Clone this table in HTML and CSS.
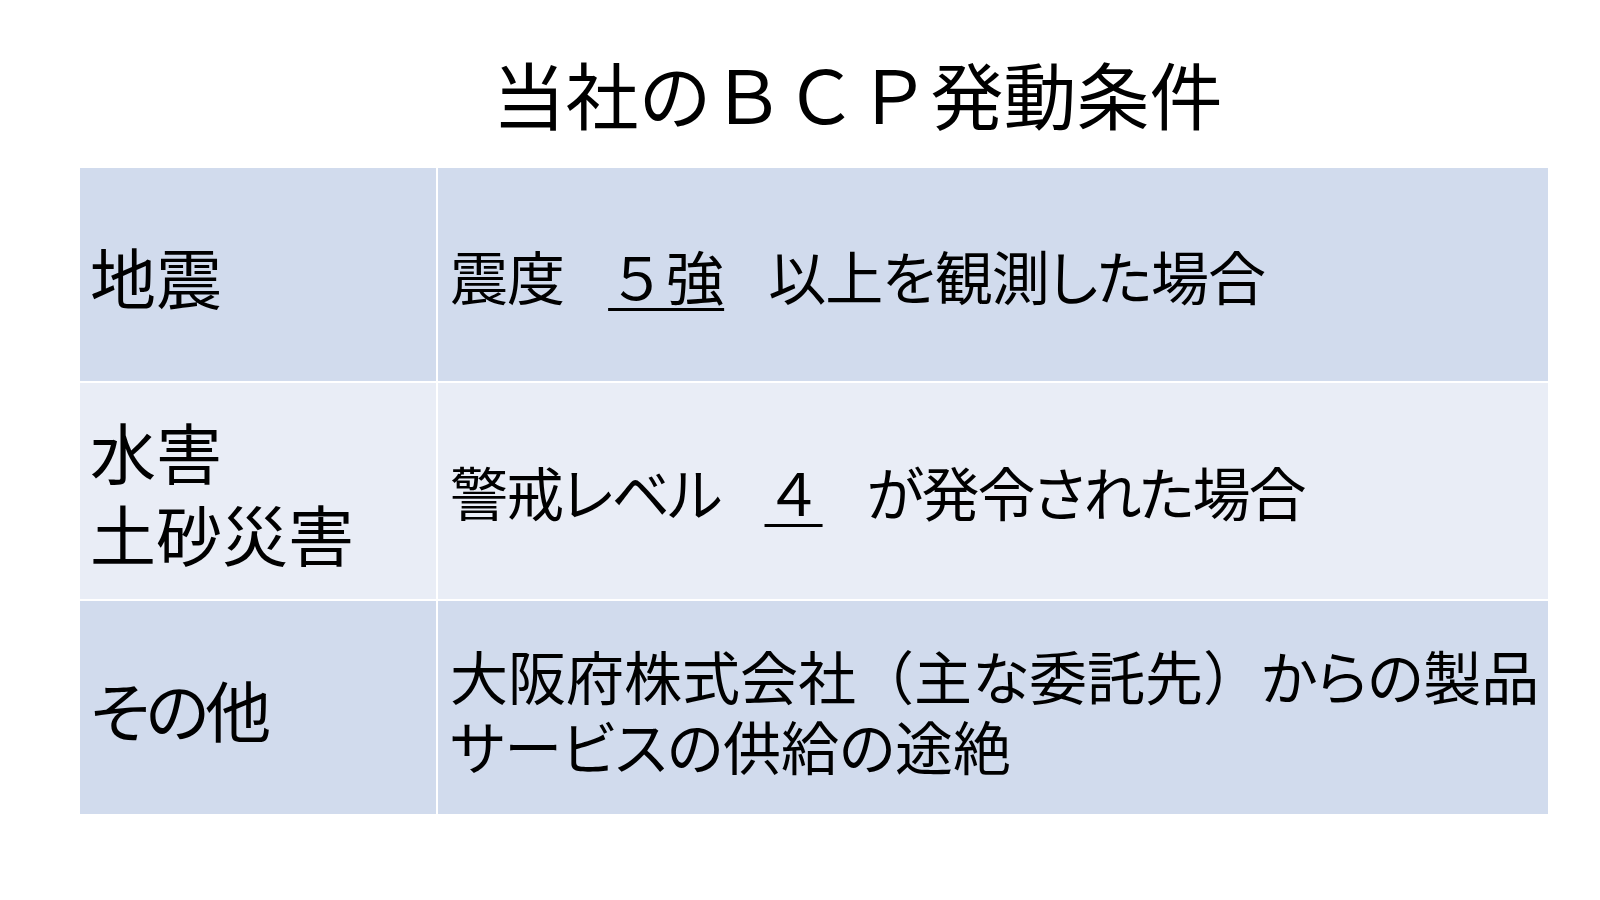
FILE: index.html
```html
<!DOCTYPE html>
<html lang="ja">
<head>
<meta charset="utf-8">
<title>当社のＢＣＰ発動条件</title>
<link rel="stylesheet" href="styles.css">
</head>
<body>
<header class="head">
  <h1 class="title">当社のＢＣＰ発動条件</h1>
</header>
<main class="conditions">
  <div class="cell label band-a"><p class="txt">地震</p></div>
  <div class="cell body band-a"><p class="txt">震度<span class="sp">　</span><span class="mark">５強</span><span class="sp">　</span>以上を観測した場合</p></div>

  <div class="cell label label-multi band-b"><p class="txt">水害<br>土砂災害</p></div>
  <div class="cell body body-tight band-b"><p class="txt">警戒レベル<span class="sp">　</span><span class="mark">４</span><span class="sp">　</span>が発令された場合</p></div>

  <div class="cell label label-kana band-a"><p class="txt">その他</p></div>
  <div class="cell body body-multi band-a"><p class="txt">大阪府株式会社<span class="fw">（</span>主な委託先<span class="fw">）</span>からの製品<br>サービスの供給の途絶</p></div>
</main>
</body>
</html>
```

FILE: styles.css
```css
html, body {
  margin: 0;
  padding: 0;
  background: #ffffff;
}

body {
  width: 1600px;
  height: 900px;
  overflow: hidden;
  font-family: "Noto Sans CJK JP", sans-serif;
  color: #000000;
}

.head {
  height: 168px;
  box-sizing: border-box;
  padding-top: 56px;
  padding-left: 115px;
  text-align: center;
}

.title {
  margin: 0;
  font-size: 73px;
  font-weight: 400;
  line-height: 73px;
}

.conditions {
  margin-left: 80px;
  width: 1468px;
  display: grid;
  grid-template-columns: 356px minmax(0, 1fr);
  grid-template-rows: 213px 216px 213px;
  gap: 2px;
  background: #ffffff;
}

.cell {
  display: flex;
  align-items: center;
  box-sizing: border-box;
  min-width: 0;
  overflow: hidden;
}

.txt {
  margin: 0;
  white-space: nowrap;
}

.band-a {
  background: #d1dbed;
}

.band-b {
  background: #e9edf6;
}

.label {
  padding-left: 10px;
  font-size: 66px;
  line-height: 72px;
  font-feature-settings: "palt";
}

.label-multi {
  line-height: 82px;
}

.label-kana {
  letter-spacing: -4px;
}

.body {
  padding-left: 12px;
  font-size: 58px;
  line-height: 70px;
  letter-spacing: -1px;
  font-feature-settings: "palt";
}

.body-tight {
  letter-spacing: -2px;
}

.body-multi {
  padding-top: 4px;
  letter-spacing: 0;
}

.sp {
  letter-spacing: -0.24em;
  font-feature-settings: normal;
}

.mark {
  font-feature-settings: normal;
  letter-spacing: 0;
  text-decoration: underline;
  text-decoration-thickness: 3px;
  text-underline-offset: 8px;
}

.fw {
  font-feature-settings: normal;
}
```
